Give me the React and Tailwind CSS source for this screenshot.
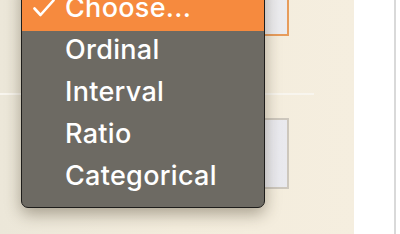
import React from "react";

const items = ["Ordinal", "Interval", "Ratio", "Categorical"];

const App = () => {
  return (
    <div className="flex h-[234px] w-[400px] overflow-hidden bg-white" style={{ fontFamily: "Inter, 'Liberation Sans', sans-serif" }}>
      {/* Form panel */}
      <div className="relative h-full w-[354px] bg-gradient-to-r from-[#ece7d9] via-[#f3ecdc] to-[#f5eedf]">
        <div className="flex flex-col">
          <div className="-mt-[14px] ml-[180px] h-[50px] w-[109px] border-2 border-[#e79c5c] bg-gradient-to-r from-[#f6f6f7] to-[#ebebee]" />
          <div className="mt-[57px] h-[2px] w-[314px] bg-[#f8f5ee]" />
          <div className="ml-[180px] mt-[23px] h-[71px] w-[109px] border-2 border-[#cdc7bd] bg-gradient-to-r from-[#f3f3f6] to-[#e9e9ee]" />
        </div>

        {/* Select dropdown menu */}
        <div className="absolute -top-[20px] left-[21px] w-[244px] rounded-b-[7px] border border-[#1e1d1b] bg-[#6d6a63] pb-[10px] pt-[6px] shadow-[0_6px_16px_rgba(60,50,30,0.4)]">
          <div className="relative flex h-[44px] items-start bg-[#f68a3e] pl-[43px] text-[27px] font-medium leading-[42px] tracking-[0.3px] text-white">
            <svg className="absolute left-[11px] top-[12px]" width="22" height="18" viewBox="0 0 22 18" fill="none" stroke="white" strokeWidth="2.6" strokeLinecap="round" strokeLinejoin="round">
              <path d="M1.5 9.5 L7.5 16 L20.5 1.5" />
            </svg>
            Choose...
          </div>
          <div className="-mt-[2px] flex flex-col">
            {items.map((t) => (
              <div key={t} className="flex h-[42px] items-center pl-[43px] text-[27px] font-medium leading-[42px] tracking-[0.3px] text-white">
                {t}
              </div>
            ))}
          </div>
        </div>
      </div>

      {/* Right side */}
      <div className="h-full w-[40px] bg-white" />
      <div className="h-full w-[2px] bg-[#d9d9d9]" />
      <div className="h-full flex-1 bg-white" />
    </div>
  );
};

export default App;
